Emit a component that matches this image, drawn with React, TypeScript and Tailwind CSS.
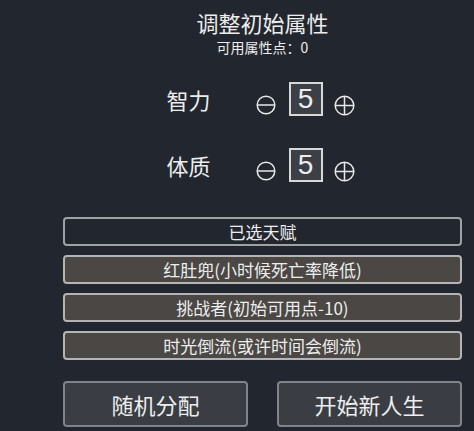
import React from "react";

const font = { fontFamily: '"Noto Sans CJK SC", "Noto Sans", sans-serif' };

function Minus() {
  return (
    <svg width="20" height="20" viewBox="0 0 20 20" className="mt-[12px] ml-[44px]">
      <circle cx="10" cy="10" r="8.8" fill="none" stroke="#e8e8e8" strokeWidth="1.5" />
      <line x1="2" y1="10" x2="18" y2="10" stroke="#e8e8e8" strokeWidth="1.5" />
    </svg>
  );
}

function Plus() {
  return (
    <svg width="21" height="21" viewBox="0 0 21 21" className="mt-[12px] ml-[11px]">
      <circle cx="10.5" cy="10.5" r="9.3" fill="none" stroke="#e8e8e8" strokeWidth="1.5" />
      <line x1="2" y1="10.5" x2="19" y2="10.5" stroke="#e8e8e8" strokeWidth="1.5" />
      <line x1="10.5" y1="2" x2="10.5" y2="19" stroke="#e8e8e8" strokeWidth="1.5" />
    </svg>
  );
}

function StatRow({ label, value, className }: { label: string; value: number; className: string }) {
  return (
    <div className={"flex items-center justify-center pr-[4px] " + className}>
      <div className="text-[22px] leading-[34px] w-[45px] whitespace-nowrap">{label}</div>
      <Minus />
      <div
        className="ml-[13px] w-[34px] h-[34px] border-2 border-[#d8d8d8] bg-[#3c3f46] flex items-center justify-center text-[28px] leading-none"
        style={{ fontFamily: '"Liberation Sans", Arial, sans-serif' }}
      >
        {value}
      </div>
      <Plus />
    </div>
  );
}

export default function App() {
  const talents = ["红肚兜(小时候死亡率降低)", "挑战者(初始可用点-10)", "时光倒流(或许时间会倒流)"];
  return (
    <div className="w-[474px] h-[431px] overflow-hidden bg-[#22262e] text-[#ededed] pl-[63px] pr-[12px]" style={font}>
      <div className="flex flex-col items-center pt-[6px]">
        <div className="text-[22px] leading-[32px]">调整初始属性</div>
        <div className="text-[14px] leading-[18px]">可用属性点：0</div>
      </div>
      <StatRow label="智力" value={5} className="mt-[26px]" />
      <StatRow label="体质" value={5} className="mt-[32px]" />
      <div className="mt-[35px] flex flex-col gap-[9px]">
        <div className="h-[29px] rounded-[4px] border-2 border-[#9fa1a5] flex items-center justify-center text-[17px]">
          已选天赋
        </div>
        {talents.map((t) => (
          <div
            key={t}
            className="h-[29px] rounded-[4px] border-2 border-[#b4b4b4] bg-[#4a4744] flex items-center justify-center text-[17px]"
          >
            {t}
          </div>
        ))}
      </div>
      <div className="mt-[21px] flex justify-between">
        <div className="w-[185px] h-[46px] rounded-[4px] border-2 border-[#7f838a] bg-[#3a3d44] flex items-center justify-center text-[22px]">
          随机分配
        </div>
        <div className="w-[185px] h-[46px] rounded-[4px] border-2 border-[#7f838a] bg-[#3a3d44] flex items-center justify-center text-[22px]">
          开始新人生
        </div>
      </div>
    </div>
  );
}
